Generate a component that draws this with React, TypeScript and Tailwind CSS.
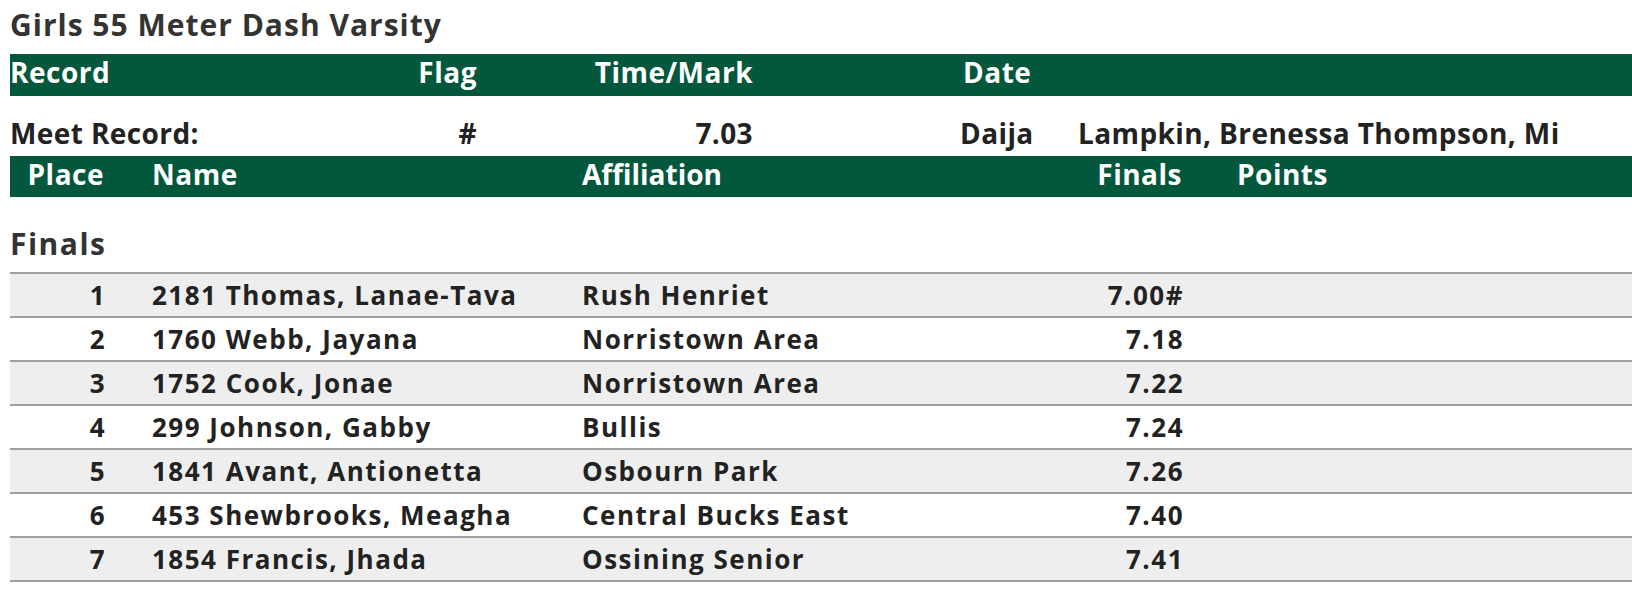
const RESULTS = [
  { place: "1", name: "2181 Thomas, Lanae-Tava", team: "Rush Henriet", mark: "7.00#" },
  { place: "2", name: "1760 Webb, Jayana", team: "Norristown Area", mark: "7.18" },
  { place: "3", name: "1752 Cook, Jonae", team: "Norristown Area", mark: "7.22" },
  { place: "4", name: "299 Johnson, Gabby", team: "Bullis", mark: "7.24" },
  { place: "5", name: "1841 Avant, Antionetta", team: "Osbourn Park", mark: "7.26" },
  { place: "6", name: "453 Shewbrooks, Meagha", team: "Central Bucks East", mark: "7.40" },
  { place: "7", name: "1854 Francis, Jhada", team: "Ossining Senior", mark: "7.41" },
];

export default function App() {
  return (
    <div className="w-[1632px] min-h-[602px] bg-white pl-[10px] font-['Open_Sans',sans-serif] text-[#222]">
      <h1 className="h-[54px] text-[30px] leading-[50px] font-bold tracking-[1px] text-[#333]">
        Girls 55 Meter Dash Varsity
      </h1>

      {/* Record header */}
      <div className="flex h-[42px] bg-[#02573d] text-[28px] leading-[36px] font-bold tracking-[0.5px] text-white">
        <div className="w-[367px]">Record</div>
        <div className="w-[100px] text-right">Flag</div>
        <div className="w-[276px] text-right">Time/Mark</div>
        <div className="ml-[210px]">Date</div>
      </div>

      <div className="flex h-[60px] pt-[19px] text-[28px] leading-[36px] font-bold tracking-[0.4px]">
        <div className="w-[367px]">Meet Record:</div>
        <div className="w-[100px] text-right">#</div>
        <div className="w-[276px] text-right">7.03</div>
        <div className="ml-[207px] w-[118px]">Daija</div>
        <div className="whitespace-nowrap">Lampkin, Brenessa Thompson, Mi</div>
      </div>

      {/* Results header */}
      <div className="flex h-[41px] bg-[#02573d] text-[28px] leading-[36px] font-bold text-white">
        <div className="w-[94px] text-right tracking-[0.5px]">Place</div>
        <div className="ml-[48px] w-[430px] tracking-[0.5px]">Name</div>
        <div className="w-[500px]">Affiliation</div>
        <div className="w-[100px] text-right tracking-[0.5px]">Finals</div>
        <div className="ml-[55px] tracking-[0.5px]">Points</div>
      </div>

      <h2 className="h-[75px] pt-[29px] text-[30px] leading-[36px] font-bold tracking-[1.5px] text-[#333]">
        Finals
      </h2>

      <div className="border-b-2 border-[#a0a0a0]">
        {RESULTS.map((r, i) => (
          <div
            key={r.place}
            className={`flex h-[44px] border-t-2 border-[#a0a0a0] text-[26px] leading-[42px] font-bold tracking-[1.5px] ${
              i % 2 === 0 ? "bg-[#eeeeee]" : "bg-white"
            }`}
          >
            <div className="w-[96px] text-right">{r.place}</div>
            <div className="ml-[46px] w-[430px] whitespace-nowrap">{r.name}</div>
            <div className="w-[500px] whitespace-nowrap">{r.team}</div>
            <div className="w-[102px] text-right">{r.mark}</div>
          </div>
        ))}
      </div>
    </div>
  );
}
